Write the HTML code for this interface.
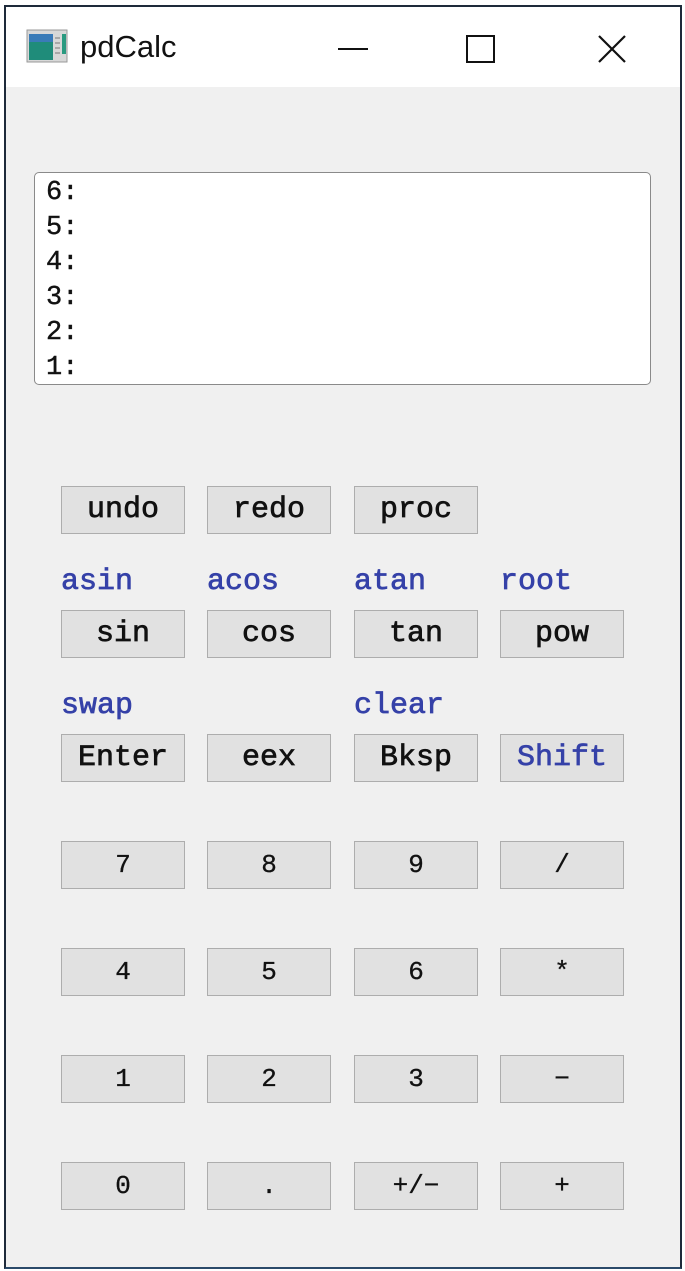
<!DOCTYPE html>
<html><head><meta charset="utf-8"><style>
html,body{margin:0;padding:0;width:685px;height:1271px;background:#fff;overflow:hidden;position:relative;font-family:"Liberation Mono",monospace}
.win{position:absolute;left:4px;top:5px;width:674px;height:1260px;border:2px solid #1e2a3a;border-bottom-color:#2b4a6a;background:#f0f0f0}
.title{position:absolute;left:0;top:0;width:674px;height:80px;background:#fff}
.ttl{position:absolute;left:74px;top:22px;font-family:"Liberation Sans",sans-serif;font-size:31px;color:#111}
.disp{position:absolute;left:34px;top:172px;width:615px;height:211px;background:#fff;border:1px solid #8a8a8a;border-radius:5px}
.disp div{position:absolute;left:11px;font-size:27px;color:#111;line-height:30px;-webkit-text-stroke:0.4px #111}
.b{position:absolute;width:124px;height:48px;background:#e1e1e1;border:1px solid #adadad;box-sizing:border-box;text-align:center;font-size:30px;line-height:46px;color:#111;-webkit-text-stroke:0.7px #111}
.b.n{font-size:26px;line-height:46px;-webkit-text-stroke:0.3px #111}
.b.s{color:#3541a8;-webkit-text-stroke:0.7px #3541a8}
.l{position:absolute;font-size:30px;color:#3541a8;line-height:30px;-webkit-text-stroke:0.7px #3541a8}
</style></head><body>
<div class="win">
<div class="title">
<svg style="position:absolute;left:20px;top:22px" width="42" height="36" viewBox="0 0 42 36"><rect x="1" y="1" width="40" height="32" fill="#d8d8d8" stroke="#999"/><rect x="3" y="5" width="24" height="26" fill="#1f8c7a"/><rect x="3" y="5" width="24" height="8" fill="#3a7bb8"/><rect x="36" y="5" width="4" height="20" fill="#2a9a80"/><g stroke="#999" stroke-width="1.5"><line x1="29" y1="9" x2="34" y2="9"/><line x1="29" y1="14" x2="34" y2="14"/><line x1="29" y1="19" x2="34" y2="19"/><line x1="29" y1="24" x2="34" y2="24"/></g></svg>
<div class="ttl">pdCalc</div>
<svg style="position:absolute;left:332px;top:40px" width="30" height="4"><rect width="30" height="2" y="1" fill="#111"/></svg>
<svg style="position:absolute;left:460px;top:28px" width="30" height="28"><rect x="1" y="1" width="27" height="26" fill="none" stroke="#111" stroke-width="2"/></svg>
<svg style="position:absolute;left:591px;top:27px" width="30" height="30"><path d="M2 2L28 28M28 2L2 28" stroke="#111" stroke-width="2.2"/></svg>
</div>
</div>
<div class="disp">
<div style="top:5px">6:</div><div style="top:40px">5:</div><div style="top:75px">4:</div><div style="top:110px">3:</div><div style="top:145px">2:</div><div style="top:180px">1:</div>
</div>

<div class="b" style="left:61px;top:486px">undo</div>
<div class="b" style="left:207px;top:486px">redo</div>
<div class="b" style="left:354px;top:486px">proc</div>

<div class="l" style="left:61px;top:567px">asin</div>
<div class="l" style="left:207px;top:567px">acos</div>
<div class="l" style="left:354px;top:567px">atan</div>
<div class="l" style="left:500px;top:567px">root</div>
<div class="b" style="left:61px;top:610px">sin</div>
<div class="b" style="left:207px;top:610px">cos</div>
<div class="b" style="left:354px;top:610px">tan</div>
<div class="b" style="left:500px;top:610px">pow</div>

<div class="l" style="left:61px;top:691px">swap</div>
<div class="l" style="left:354px;top:691px">clear</div>
<div class="b" style="left:61px;top:734px">Enter</div>
<div class="b" style="left:207px;top:734px">eex</div>
<div class="b" style="left:354px;top:734px">Bksp</div>
<div class="b s" style="left:500px;top:734px">Shift</div>

<div class="b n" style="left:61px;top:841px">7</div>
<div class="b n" style="left:207px;top:841px">8</div>
<div class="b n" style="left:354px;top:841px">9</div>
<div class="b n" style="left:500px;top:841px">/</div>

<div class="b n" style="left:61px;top:948px">4</div>
<div class="b n" style="left:207px;top:948px">5</div>
<div class="b n" style="left:354px;top:948px">6</div>
<div class="b n" style="left:500px;top:948px">*</div>

<div class="b n" style="left:61px;top:1055px">1</div>
<div class="b n" style="left:207px;top:1055px">2</div>
<div class="b n" style="left:354px;top:1055px">3</div>
<div class="b n" style="left:500px;top:1055px">&minus;</div>

<div class="b n" style="left:61px;top:1162px">0</div>
<div class="b n" style="left:207px;top:1162px">.</div>
<div class="b n" style="left:354px;top:1162px">+/&minus;</div>
<div class="b n" style="left:500px;top:1162px">+</div>
</body></html>
